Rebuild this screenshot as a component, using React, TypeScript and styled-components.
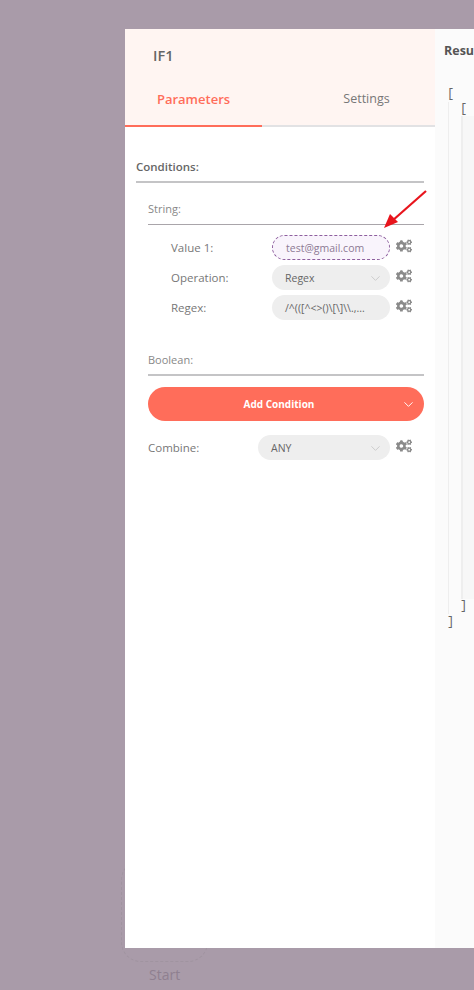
import React from 'react';
import styled, { createGlobalStyle } from 'styled-components';
import { FaCogs } from 'react-icons/fa';
import { ChevronDown } from 'lucide-react';

const Global = createGlobalStyle`
  html, body { margin: 0; padding: 0; background: #a99ba9; }
  body { font-family: "Open Sans", "Liberation Sans", sans-serif; color: #666; }
`;

const Canvas = styled.div`
  position: relative;
  width: 474px;
  height: 990px;
  overflow: hidden;
  box-sizing: border-box;
  padding: 29px 0 0 125px;
  background: #a99ba9;
`;

const StartNode = styled.div`
  position: absolute;
  left: 121px;
  top: 860px;
  width: 87px;
  height: 102px;
  box-sizing: border-box;
  border: 1px dashed #a094a0;
  border-radius: 20px;
`;

const StartLabel = styled.div`
  position: absolute;
  left: 149px;
  top: 965px;
  font-size: 14px;
  line-height: 19px;
  color: #8f8090;
`;

const Panel = styled.div`
  position: relative;
  display: flex;
  width: 349px;
  height: 919px;
  background: #fff;
`;

const Params = styled.div`
  width: 310px;
  flex: none;
  display: flex;
  flex-direction: column;
`;

const Header = styled.div`
  height: 98px;
  box-sizing: border-box;
  background: #fff5f2;
  display: flex;
  flex-direction: column;
`;

const Title = styled.div`
  padding: 17px 0 0 28px;
  font-size: 14.5px;
  line-height: 20px;
  font-weight: 600;
  color: #666;
`;

const Tabs = styled.div`
  display: flex;
  margin-top: 22px;
  flex: 1;
`;

const Tab = styled.div<{ $active?: boolean; $w: number; $shift?: number }>`
  width: ${p => p.$w}px;
  box-sizing: border-box;
  text-align: center;
  font-size: ${p => (p.$active ? 13 : 12.5)}px;
  line-height: 18px;
  font-weight: ${p => (p.$active ? 600 : 400)};
  color: ${p => (p.$active ? '#ff6d5a' : '#777')};
  border-bottom: 2px solid ${p => (p.$active ? '#ff6d5a' : '#e2e2e4')};
  padding: 2px 0 0 ${p => p.$shift ?? 0}px;
`;

const Body = styled.div`
  padding: 32px 11px 0 12px;
`;

const Section = styled.div`
  font-size: 11.5px;
  line-height: 16px;
  font-weight: 600;
  color: #666;
  margin-left: -1px;
  padding-bottom: 6px;
  border-bottom: 2px solid #c4c4c6;
`;

const Nested = styled.div`
  padding-left: 11px;
`;

const SubTitle = styled.div<{ $top: number; $thick?: boolean }>`
  margin-top: ${p => p.$top}px;
  font-size: 11px;
  line-height: 16px;
  color: #888;
  padding-bottom: ${p => (p.$thick ? 6 : 7)}px;
  border-bottom: ${p => (p.$thick ? '2px solid #c4c4c6' : '1px solid #a9a5aa')};
`;

const Rows = styled.div`
  display: flex;
  flex-direction: column;
  gap: 5px;
  margin-top: 10px;
`;

const Row = styled.div<{ $indent?: number }>`
  display: flex;
  align-items: center;
  height: 25px;
  padding-left: ${p => p.$indent ?? 23}px;
  font-size: 11.5px;
  color: #777;
`;

const Label = styled.div<{ $w: number }>`
  width: ${p => p.$w}px;
  flex: none;
`;

const Pill = styled.div<{ $dashed?: boolean; $w?: number }>`
  position: relative;
  width: ${p => p.$w ?? 118}px;
  height: 25px;
  flex: none;
  box-sizing: border-box;
  border-radius: 13px;
  padding-left: 13px;
  display: flex;
  align-items: center;
  font-size: 10.5px;
  white-space: nowrap;
  overflow: hidden;
  color: ${p => (p.$dashed ? '#8d7a94' : '#666')};
  background: ${p => (p.$dashed ? '#f9f4fc' : '#eeeeee')};
  border: ${p => (p.$dashed ? '1px dashed #8e5f9e' : 'none')};
`;

const Chevron = styled(ChevronDown)`
  position: absolute;
  right: 7px;
  top: 6px;
  width: 15px;
  height: 15px;
  color: #c9c9c9;
  stroke-width: 1.5;
`;

const Cog = styled(FaCogs)`
  margin-left: 6px;
  margin-top: -3px;
  width: 16px;
  height: 14px;
  color: #8a8a8a;
  flex: none;
`;

const AddButton = styled.div`
  position: relative;
  height: 34px;
  margin-top: 11px;
  border-radius: 17px;
  background: #ff6d5a;
  color: #fff;
  font-size: 10px;
  font-weight: 700;
  display: flex;
  align-items: center;
  justify-content: center;
  box-sizing: border-box;
  padding-right: 14px;
`;

const ButtonChevron = styled(ChevronDown)`
  position: absolute;
  right: 8px;
  top: 10px;
  width: 15px;
  height: 15px;
  color: #fff;
  stroke-width: 1.5;
`;

const CombineRow = styled(Row)`
  margin-top: 14px;
`;

const Results = styled.div`
  flex: 1;
  min-width: 0;
  background: #fbfbfb;
  padding: 14px 0 0 9px;
  overflow: hidden;
`;

const ResultsTitle = styled.div`
  font-size: 12.5px;
  line-height: 16px;
  font-weight: 700;
  color: #555;
  white-space: nowrap;
`;

const Code = styled.div`
  margin-top: 28px;
  font-family: "Liberation Mono", monospace;
  font-size: 12px;
  line-height: 14px;
  color: #666;
  padding-left: 3px;
`;

const Block = styled.div`
  margin: 1px 0 1px 1px;
  padding-left: 11px;
  height: 512px;
  border-left: 1px solid #eeeeee;
`;

const InnerBlock = styled.div`
  margin: 0 0 0 1px;
  height: 483px;
  border-left: 2px solid #eeeeee;
  background: #f7f7f7;
`;

const Arrow = styled.svg`
  position: absolute;
  left: 380px;
  top: 186px;
  width: 50px;
  height: 44px;
`;

const Cogs = () => <Cog />;

export default function App() {
  return (
    <Canvas>
      <Global />
      <StartNode />
      <StartLabel>Start</StartLabel>
      <Panel>
        <Params>
          <Header>
            <Title>IF1</Title>
            <Tabs>
              <Tab $active $w={137}>Parameters</Tab>
              <Tab $w={173} $shift={36}>Settings</Tab>
            </Tabs>
          </Header>
          <Body>
            <Section>Conditions:</Section>
            <Nested>
              <SubTitle $top={18}>String:</SubTitle>
              <Rows>
                <Row>
                  <Label $w={101}>Value 1:</Label>
                  <Pill $dashed>test@gmail.com</Pill>
                  <Cogs />
                </Row>
                <Row>
                  <Label $w={101}>Operation:</Label>
                  <Pill>Regex<Chevron /></Pill>
                  <Cogs />
                </Row>
                <Row>
                  <Label $w={101}>Regex:</Label>
                  <Pill>/^(([^&lt;&gt;()\[\]\\.,...</Pill>
                  <Cogs />
                </Row>
              </Rows>
              <SubTitle $top={32} $thick>Boolean:</SubTitle>
              <AddButton>Add Condition<ButtonChevron /></AddButton>
              <CombineRow $indent={0}>
                <Label $w={110}>Combine:</Label>
                <Pill $w={132}>ANY<Chevron /></Pill>
                <Cogs />
              </CombineRow>
            </Nested>
          </Body>
        </Params>
        <Results>
          <ResultsTitle>Results</ResultsTitle>
          <Code>
            [
            <Block>
              [
              <InnerBlock />
              ]
            </Block>
            ]
          </Code>
        </Results>
      </Panel>
      <Arrow viewBox="0 0 50 44">
        <path d="M46 5 L12 35" stroke="#e8141c" strokeWidth="2.2" fill="none" />
        <path d="M4 42 L18 36 L10 28 Z" fill="#e8141c" />
      </Arrow>
    </Canvas>
  );
}
